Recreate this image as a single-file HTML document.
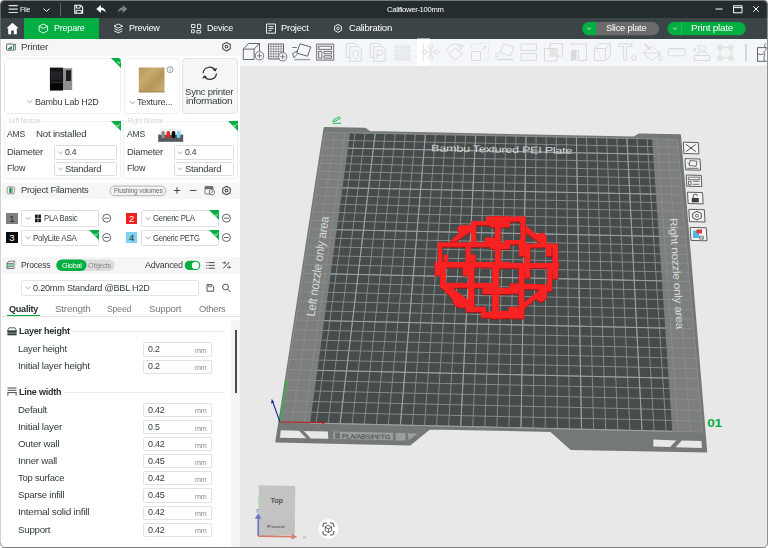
<!DOCTYPE html>
<html><head><meta charset="utf-8"><title>Califlower-100mm</title>
<style>
*{box-sizing:border-box;margin:0;padding:0}
html,body{width:768px;height:548px;overflow:hidden;background:#e8e8e8}
body{font-family:"Liberation Sans",sans-serif;font-size:9.3px;color:#303a3c;position:relative;letter-spacing:-0.25px}
.abs{position:absolute}
.t{position:absolute;white-space:nowrap;line-height:12px}
#titlebar{left:0;top:0;width:768px;height:18px;background:#252c2e}
#tabbar{left:0;top:18px;width:768px;height:21px;background:#3b4446}
#side{left:0;top:38.5px;width:240px;height:510px;background:#fff}
.hdr{position:absolute;left:2px;width:238px;background:#f6f6f6}
.card{position:absolute;border:1px solid #ebeef0;border-radius:4px;background:#fff}
.cb{position:absolute;border:1px solid #dedede;border-radius:1.5px;background:#fff}
.corner{position:absolute;width:0;height:0;border-style:solid;border-color:#00ae42 #00ae42 transparent transparent}
.corner::after{content:"";position:absolute;left:0.700px;top:-2.600px;width:3.200px;height:1.600px;border-left:0.700px solid #8fdca9;border-bottom:0.700px solid #8fdca9;transform:rotate(-52deg)}
.lbl{color:#333c3e}
.gray{color:#6b6b6b}
.unit{position:absolute;font-size:6.6px;color:#8a8a8a;letter-spacing:-0.1px;line-height:10px}
.sw{position:absolute;width:11.2px;height:11.2px;font-size:9.5px;line-height:11.2px;text-align:center;letter-spacing:0}
</style></head><body>
<div id="titlebar" class="abs"></div>
<div id="tabbar" class="abs"></div>
<div class="abs" style="left:23.7px;top:18px;width:75.5px;height:21px;background:#00ae42"></div>
<svg class="abs" style="left:0;top:0" width="768" height="40" viewBox="0 0 768 40" fill="none">
 <!-- hamburger -->
 <path d="M8.600 5.700h9.200M8.600 9.200h9.200M8.600 12.500h9.200" stroke="#e2e2e2" stroke-width="1.200"/>
 <!-- chevron -->
 <path d="M43.5 8.6l3 2.8 3-2.8" stroke="#fff" stroke-width="1"/>
 <path d="M60.5 3v13.5" stroke="#5a6264" stroke-width="1"/>
 <!-- save -->
 <path d="M74.8 5.3h5.8l2 2v6h-7.8z" stroke="#fff" stroke-width="1.1"/>
 <path d="M76.5 5.5v2.6h3.6V5.5M76.3 13v-2.6h5v2.6" stroke="#fff" stroke-width="0.9"/>
 <!-- undo -->
 <path d="M96.3 9l4.6-4v2.4c3 0 4.6 2 4.8 5.4-1.200-2-2.600-2.600-4.800-2.600v2.800z" fill="#fff"/>
 <!-- redo -->
 <path d="M127.300 9l-4.600-4v2.400c-3 0-4.600 2-4.800 5.400 1.200-2 2.600-2.600 4.800-2.600v2.800z" fill="#7d8486"/>
 <!-- home -->
 <path d="M12.500 22.800l-6 5.400h1.700v6h3v-3.600h2.600v3.600h3v-6h1.700z" fill="#fff"/>
 <!-- prepare cube -->
 <path d="M43.300 24l4.200 2.200v4.600l-4.200 2.300-4.200-2.300v-4.600zM39.300 26.300l4 2.200 4-2.200" stroke="#fff" stroke-width="0.9" stroke-linejoin="round"/>
 <!-- preview layers -->
 <path d="M118.300 24l4.300 2.100-4.300 2.100-4.300-2.100zM114.300 28.500l4 2 4-2M114.300 30.900l4 2 4-2" stroke="#fff" stroke-width="0.9" stroke-linejoin="round"/>
 <!-- device -->
 <path d="M191.500 24.500h3.500v3h-3.500zM197.500 24.300h3.200v4.200h-3.200zM191.500 29.800h2.800v3h-2.800zM196.800 30.500h3.800v2.500h-3.800z" stroke="#fff" stroke-width="0.85"/>
 <!-- project -->
 <path d="M266.500 24h9v9.200h-9zM268.500 26.600h5M268.500 28.600h5M268.500 30.600h3" stroke="#fff" stroke-width="0.9"/>
 <!-- calibration -->
 <path d="M338 24.400l3.400 2v4l-3.400 2-3.400-2v-4z" stroke="#fff" stroke-width="0.9"/><circle cx="338" cy="28.400" r="1.300" stroke="#fff" stroke-width="0.8"/>
 <!-- window controls -->
 <path d="M715.500 9h7" stroke="#fff" stroke-width="1"/>
 <path d="M733.500 5.800h8.500v7h-8.500zM733.500 7.600h8.500" stroke="#fff" stroke-width="1"/>
 <path d="M753.300 6.300l5.500 5.500M758.800 6.300l-5.500 5.500" stroke="#fff" stroke-width="1"/>
 <!-- slice -->
 <path d="M589 22h63.500a6.600 6.600 0 0 1 0 13.300H589z" fill="#6b6b6b"/>
 <path d="M596 22h-7.300a6.600 6.600 0 0 0 0 13.300H596z" fill="#00ae42"/>
 <path d="M587 27.600l2 1.800 2-1.800" stroke="#fff" stroke-width="0.8"/>
 <!-- print -->
 <rect x="667.400" y="22" width="78.400" height="13.300" rx="6.650" fill="#00ae42"/>
 <path d="M681.500 22v13.300" stroke="#2dbd62" stroke-width="0.7"/>
 <path d="M673 27.600l2 1.800 2-1.800" stroke="#fff" stroke-width="0.8"/>
</svg>
<div class="t" style="transform:scaleX(0.905);transform-origin:0 0;left:20px;top:4px;color:#fff;font-size:7.6px;letter-spacing:-0.3px">File</div>
<div class="t" style="transform:scaleX(1.032);transform-origin:0 0;left:386.500px;top:3.500px;color:#fff;font-size:7.4px;letter-spacing:-0.3px">Califlower-100mm</div>
<div class="t" style="transform:scaleX(0.921);transform-origin:0 0;left:54.300px;top:22.100px;color:#fff;font-size:9.8px">Prepare</div>
<div class="t" style="transform:scaleX(0.921);transform-origin:0 0;left:129.300px;top:22.100px;color:#fff;font-size:9.8px">Preview</div>
<div class="t" style="transform:scaleX(0.914);transform-origin:0 0;left:207.300px;top:22.100px;color:#fff;font-size:9.8px">Device</div>
<div class="t" style="transform:scaleX(0.957);transform-origin:0 0;left:281.300px;top:22.100px;color:#fff;font-size:9.8px">Project</div>
<div class="t" style="transform:scaleX(0.975);transform-origin:0 0;left:349px;top:22.100px;color:#fff;font-size:9.8px">Calibration</div>
<div class="t" style="transform:scaleX(0.952);transform-origin:0 0;left:605.500px;top:22.200px;color:#fff;font-size:9.8px">Slice plate</div>
<div class="t" style="transform:scaleX(1.015);transform-origin:0 0;left:691px;top:22.200px;color:#fff;font-size:9.8px">Print plate</div>
<div id="side" class="abs"></div>
<div class="abs" style="left:0;top:38.500px;width:1.200px;height:510px;background:#d2d2d2"></div>
<!-- Printer header -->
<div class="hdr" style="top:38.500px;height:17px"></div>
<svg class="abs" style="left:0;top:38" width="240" height="20" viewBox="0 38 240 20" fill="none">
 <rect x="6.600" y="44" width="7" height="6.200" rx="0.800" stroke="#3a4446" stroke-width="0.800"/>
 <path d="M13.600 45l1.800-1v5.600l-1.800 0.800M8 49l3.500-2.500v2.500z" stroke="#3a4446" stroke-width="0.700"/>
 <path d="M8 49l3.600-2.600v2.600z" fill="#00ae42"/>
 <path d="M226.500 42.400l3.800 2.100v4.300l-3.800 2.100-3.800-2.100v-4.300z" stroke="#4a5052" stroke-width="1.100" stroke-linejoin="round"/><circle cx="226.500" cy="46.600" r="1.400" stroke="#4a5052" stroke-width="1.100"/>
</svg>
<div class="t lbl" style="transform:scaleX(0.987);transform-origin:0 0;left:21.300px;top:40.500px;font-size:9.9px">Printer</div>
<!-- cards -->
<div class="card" style="left:3.500px;top:57.800px;width:117.700px;height:56px"></div>
<div class="corner" style="left:111.200px;top:57.800px;border-width:5px 5px 5px 5px;border-top-right-radius:4px"></div>
<div class="card" style="left:124.200px;top:57.800px;width:55.600px;height:56px"></div>
<div class="card" style="left:182px;top:57.800px;width:55.700px;height:56px;background:#f6f6f6;border-color:#e3e3e3"></div>
<!-- printer image -->
<svg class="abs" style="left:48px;top:66px" width="26" height="26" viewBox="0 0 26 26">
 <rect x="1.900" y="1.600" width="13.100" height="23" fill="#161618"/>
 <rect x="15" y="2.200" width="9.200" height="21.800" fill="#8e8f91"/>
 <rect x="18" y="4.200" width="5" height="10.800" fill="#1c1d1f"/>
 <rect x="3" y="5.500" width="11" height="8" fill="#222326"/>
 <rect x="2.500" y="16.300" width="12" height="0.700" fill="#3a3a3c"/>
 <rect x="2.200" y="17.500" width="12.600" height="6.500" fill="#050505"/>
</svg>
<svg class="abs" style="left:26px;top:99.300px" width="8" height="6" viewBox="0 0 8 6" fill="none"><path d="M1 1.500l2.500 2.200 2.500-2.200" stroke="#8a9092" stroke-width="0.800"/></svg>
<div class="t lbl" style="transform:scaleX(0.918);transform-origin:0 0;left:34.500px;top:95.500px;font-size:9.8px">Bambu Lab H2D</div>
<!-- plate image -->
<svg class="abs" style="left:138px;top:65.500px" width="38" height="28" viewBox="0 0 38 28">
 <defs><linearGradient id="pg" x1="0" y1="0" x2="1" y2="1"><stop offset="0" stop-color="#b89a5e"/><stop offset="0.350" stop-color="#c8ab6e"/><stop offset="0.600" stop-color="#b59659"/><stop offset="1" stop-color="#cdb079"/></linearGradient></defs>
 <rect x="0.800" y="1.500" width="25.700" height="24.800" fill="url(#pg)"/><rect x="0.800" y="25.300" width="25.700" height="1" fill="#a08450"/>
 <circle cx="32" cy="3.600" r="3" fill="#fff" stroke="#6b7375" stroke-width="0.700"/>
 <path d="M32 2v0.800M32 3.400v2" stroke="#6b7375" stroke-width="0.700"/>
</svg>
<svg class="abs" style="left:128.700px;top:99.500px" width="8" height="6" viewBox="0 0 8 6" fill="none"><path d="M1 1.500l2.500 2.200 2.500-2.200" stroke="#8a9092" stroke-width="0.800"/></svg>
<div class="t lbl" style="transform:scaleX(0.934);transform-origin:0 0;left:137.200px;top:95.500px;font-size:9.8px">Texture...</div>
<!-- sync -->
<svg class="abs" style="left:198.900px;top:64.200px" width="22" height="19.800" viewBox="0 0 20 18" fill="none">
 <path d="M3.700 8.500a6 6 0 0 1 11-2.800" stroke="#303a3c" stroke-width="1.100"/>
 <path d="M15.900 8.500a6 6 0 0 1-11 2.800" stroke="#303a3c" stroke-width="1.100"/>
 <path d="M16.600 3.500l-1.500 3.300-3-1.600z" fill="#303a3c"/>
 <path d="M3 13.500l1.500-3.300 3 1.600z" fill="#303a3c"/>
</svg>
<div class="t lbl" style="transform:scaleX(0.978);transform-origin:0 0;left:185.200px;top:85.600px;font-size:9.8px">Sync printer</div>
<div class="t lbl" style="transform:scaleX(1.013);transform-origin:0 0;left:185.500px;top:95.300px;font-size:9.8px">information</div>
<!-- nozzle boxes -->
<div class="card" style="left:3.500px;top:120.500px;width:117.200px;height:58.800px;border-color:#ebf2f6;border-radius:2px"></div>
<div class="card" style="left:122.800px;top:120.500px;width:115px;height:58.800px;border-color:#ebf2f6;border-radius:2px"></div>
<div class="t" style="transform:scaleX(1.003);transform-origin:0 0;left:6.500px;top:115.500px;font-size:6.6px;color:#d0d3d5;background:#fff;padding:0 1.500px;line-height:9px;letter-spacing:-0.1px">Left Nozzle</div>
<div class="t" style="transform:scaleX(0.987);transform-origin:0 0;left:126px;top:115.500px;font-size:6.6px;color:#d0d3d5;background:#fff;padding:0 1.500px;line-height:9px;letter-spacing:-0.1px">Right Nozzle</div>
<div class="corner" style="left:110.700px;top:120.500px;border-width:5px"></div>
<div class="corner" style="left:227.800px;top:120.500px;border-width:5px"></div>
<div class="t lbl" style="transform:scaleX(0.879);transform-origin:0 0;left:7px;top:128.300px;font-size:9.8px">AMS</div>
<div class="t lbl" style="transform:scaleX(0.995);transform-origin:0 0;left:35.500px;top:128.300px;font-size:9.8px">Not installed</div>
<div class="t lbl" style="transform:scaleX(0.879);transform-origin:0 0;left:126.700px;top:128.300px;font-size:9.8px">AMS</div>
<svg class="abs" style="left:157.800px;top:129px;overflow:visible" width="26" height="14" viewBox="0 0 26 14">
 <rect x="0.200" y="5.500" width="25" height="7.300" fill="#55595a"/>
 <rect x="2" y="-0.300" width="21.500" height="6" rx="1" fill="#eceded"/>
 <rect x="3.300" y="2" width="3.600" height="7.300" rx="1.700" fill="#8a8c8d"/>
 <rect x="8.500" y="2" width="3.600" height="7.300" rx="1.700" fill="#f02424"/>
 <rect x="13.700" y="2" width="3.600" height="7.300" rx="1.700" fill="#0e0e0e"/>
 <rect x="18.800" y="2" width="3.600" height="7.300" rx="1.700" fill="#78d4f4"/>
</svg>
<div class="t lbl" style="transform:scaleX(0.951);transform-origin:0 0;left:7px;top:146px;font-size:9.8px">Diameter</div>
<div class="t lbl" style="transform:scaleX(0.924);transform-origin:0 0;left:7px;top:162px;font-size:9.8px">Flow</div>
<div class="t lbl" style="transform:scaleX(0.951);transform-origin:0 0;left:126.700px;top:146px;font-size:9.8px">Diameter</div>
<div class="t lbl" style="transform:scaleX(0.924);transform-origin:0 0;left:126.700px;top:162px;font-size:9.8px">Flow</div>
<div class="cb" style="left:53.500px;top:145.300px;width:63px;height:14.300px"></div>
<div class="cb" style="left:53.500px;top:161.600px;width:63px;height:14.300px"></div>
<div class="cb" style="left:173.500px;top:145.300px;width:60.500px;height:14.300px"></div>
<div class="cb" style="left:173.500px;top:161.600px;width:60.500px;height:14.300px"></div>
<svg class="abs" style="left:0;top:145px" width="240" height="32" viewBox="0 145 240 32" fill="none" stroke="#8a9092" stroke-width="0.800">
 <path d="M58.200 151.600l2.200 2 2.200-2M58.200 167.800l2.200 2 2.200-2M178 151.600l2.200 2 2.200-2M178 167.800l2.200 2 2.200-2"/>
</svg>
<div class="t lbl" style="transform:scaleX(0.885);transform-origin:0 0;left:65.300px;top:146.400px;font-size:9.8px">0.4</div>
<div class="t lbl" style="transform:scaleX(0.956);transform-origin:0 0;left:65.300px;top:162.600px;font-size:9.8px">Standard</div>
<div class="t lbl" style="transform:scaleX(0.885);transform-origin:0 0;left:185px;top:146.400px;font-size:9.8px">0.4</div>
<div class="t lbl" style="transform:scaleX(0.956);transform-origin:0 0;left:185px;top:162.600px;font-size:9.8px">Standard</div>
<!-- Project Filaments header -->
<div class="hdr" style="top:182.500px;height:16.500px"></div>
<svg class="abs" style="left:0;top:182" width="240" height="18" viewBox="0 182 240 18" fill="none">
 <rect x="7.200" y="186.800" width="7.200" height="7" rx="1.500" stroke="#6a7072" stroke-width="0.700"/>
 <path d="M9.500 187.600v5.400M12.100 187.600v5.400" stroke="#3a4446" stroke-width="0.600"/>
 <rect x="10" y="187.800" width="1.600" height="5" fill="#00ae42"/>
 <rect x="110" y="186" width="55.800" height="9.700" rx="4.850" fill="#f2f2f2" stroke="#9a9a9a" stroke-width="0.700"/>
 <path d="M173.800 190.500h6.400M177 187.300v6.400" stroke="#303a3c" stroke-width="0.900"/>
 <path d="M190 190.500h6.400" stroke="#303a3c" stroke-width="0.900"/>
 <rect x="205" y="186.400" width="8" height="7.600" rx="0.800" stroke="#5a6062" stroke-width="0.800"/><rect x="205" y="186.400" width="8" height="2.800" fill="#6a6e70"/>
 <circle cx="211.800" cy="192.200" r="2.700" fill="#f6f6f6" stroke="#5a6062" stroke-width="0.800"/><path d="M210.600 193.200l2.400-2" stroke="#5a6062" stroke-width="0.900"/>
 <path d="M226.500 186.300l3.800 2.100v4.300l-3.800 2.100-3.800-2.100v-4.300z" stroke="#4a5052" stroke-width="1.100" stroke-linejoin="round"/><circle cx="226.500" cy="190.500" r="1.400" stroke="#4a5052" stroke-width="1.100"/>
</svg>
<div class="t lbl" style="transform:scaleX(0.937);transform-origin:0 0;left:21.300px;top:184.300px;font-size:9.9px">Project Filaments</div>
<div class="t" style="transform:scaleX(0.909);transform-origin:0 0;left:113.500px;top:185.300px;font-size:7.300px;color:#6b6b6b;line-height:11px;letter-spacing:-0.2px">Flushing volumes</div>
<!-- filament rows -->
<div class="sw" style="left:6.400px;top:212.600px;background:#808080;color:#2a2a2a">1</div>
<div class="sw" style="left:6.400px;top:231.800px;background:#0d0d0d;color:#fff">3</div>
<div class="sw" style="left:126px;top:212.600px;background:#f02020;color:#fff">2</div>
<div class="sw" style="left:126px;top:231.800px;background:#7ed3f1;color:#2a2a2a">4</div>
<div class="cb" style="left:21.300px;top:210.300px;width:77.400px;height:16.400px"></div>
<div class="cb" style="left:21.300px;top:229.600px;width:77.400px;height:16.400px"></div>
<div class="cb" style="left:141px;top:210.300px;width:77.500px;height:16.400px"></div>
<div class="cb" style="left:141px;top:229.600px;width:77.500px;height:16.400px"></div>
<div class="corner" style="left:88.700px;top:229.600px;border-width:5px"></div>
<div class="corner" style="left:208.500px;top:210.300px;border-width:5px"></div>
<div class="corner" style="left:208.500px;top:229.600px;border-width:5px"></div>
<svg class="abs" style="left:0;top:208" width="240" height="40" viewBox="0 208 240 40" fill="none">
 <g stroke="#8a9092" stroke-width="0.800"><path d="M26 217.500l2.300 2 2.300-2M26 236.800l2.300 2 2.300-2M145.800 217.500l2.300 2 2.300-2M145.800 236.800l2.300 2 2.300-2"/></g>
 <rect x="35" y="214.600" width="6" height="7.600" fill="#1a1a1a"/>
 <path d="M38 214.600v7.600M35 218.400h6" stroke="#fff" stroke-width="0.600"/>
 <g stroke="#3a4446" stroke-width="0.800"><circle cx="106.700" cy="218.200" r="4"/><circle cx="106.700" cy="237.500" r="4"/><circle cx="226.400" cy="218.200" r="4"/><circle cx="226.400" cy="237.500" r="4"/>
 <path d="M104.300 218.200h4.800M104.300 237.500h4.800M224 218.200h4.800M224 237.500h4.800"/></g>
</svg>
<div class="t lbl" style="transform:scaleX(0.830);transform-origin:0 0;left:44px;top:212.300px;font-size:9.3px">PLA Basic</div>
<div class="t lbl" style="transform:scaleX(0.861);transform-origin:0 0;left:33.200px;top:231.600px;font-size:9.3px">PolyLite ASA</div>
<div class="t lbl" style="transform:scaleX(0.835);transform-origin:0 0;left:152.700px;top:212.300px;font-size:9.3px">Generic PLA</div>
<div class="t lbl" style="transform:scaleX(0.813);transform-origin:0 0;left:152.700px;top:231.600px;font-size:9.3px">Generic PETG</div>
<!-- Process header -->
<div class="hdr" style="top:257.300px;height:16.300px"></div>
<svg class="abs" style="left:0;top:257" width="240" height="18" viewBox="0 257 240 18" fill="none">
 <path d="M7 263.600l1.600-2.400h6.400l-1.600 2.400z" stroke="#3a4446" stroke-width="0.700" stroke-linejoin="round"/>
 <path d="M7.200 265h6.600l1.200-1.400" stroke="#00ae42" stroke-width="0.900"/>
 <path d="M7 266.700h6.800l1.200-1.400M7 268.500h6.800l1.200-1.400M7 263.600v5" stroke="#3a4446" stroke-width="0.700"/>
 <rect x="56.300" y="259.500" width="58.500" height="11.400" rx="5.700" fill="#dcdcdc"/>
 <rect x="56.300" y="259.500" width="30.300" height="11.400" rx="5.700" fill="#00ae42"/>
 <rect x="184.700" y="260.700" width="15.600" height="9.400" rx="4.700" fill="#00ae42"/>
 <circle cx="195.500" cy="265.400" r="3.600" fill="#fff"/>
 <path d="M208.500 262.600h6.300M208.500 265.400h6.300M208.500 268.200h6.300" stroke="#303a3c" stroke-width="0.900"/>
 <path d="M206.300 262.600h1.100M206.300 265.400h1.100M206.300 268.200h1.100" stroke="#303a3c" stroke-width="0.900"/>
 <path d="M223.200 268.400l6.200-6.400" stroke="#303a3c" stroke-width="1"/><path d="M222.300 262.800h3.200M224.300 261.400l1.400 1.400-1.400 1.400M227 267.300h3.200M229 265.900l1.400 1.400-1.400 1.400" stroke="#303a3c" stroke-width="0.800"/>
</svg>
<div class="t lbl" style="transform:scaleX(0.867);transform-origin:0 0;left:21.300px;top:259.100px;font-size:9.9px">Process</div>
<div class="t" style="transform:scaleX(0.991);transform-origin:0 0;left:61.800px;top:259.700px;font-size:7.400px;color:#fff;line-height:11px">Global</div>
<div class="t" style="transform:scaleX(0.987);transform-origin:0 0;left:88px;top:259.700px;font-size:7.400px;color:#8a8a8a;line-height:11px">Objects</div>
<div class="t lbl" style="transform:scaleX(0.902);transform-origin:0 0;left:144.800px;top:259.100px;font-size:9.9px">Advanced</div>
<!-- preset -->
<div class="cb" style="left:21.300px;top:279.700px;width:177.400px;height:16.400px;border-color:#dfe6ea"></div>
<svg class="abs" style="left:0;top:279" width="240" height="18" viewBox="0 279 240 18" fill="none">
 <path d="M26 286.800l2.300 2 2.300-2" stroke="#8a9092" stroke-width="0.800"/>
 <path d="M207 284.600h4.800l1.800 1.800v4.800H207z" stroke="#3a4446" stroke-width="0.900"/><path d="M208.400 284.800v2h2.800v-2" stroke="#3a4446" stroke-width="0.700"/>
 <circle cx="225.500" cy="287" r="2.900" stroke="#3a4446" stroke-width="0.900"/><path d="M227.700 289.200l2.800 2.800" stroke="#3a4446" stroke-width="1"/>
</svg>
<div class="t lbl" style="transform:scaleX(0.933);transform-origin:0 0;left:33.200px;top:281.800px;font-size:9.8px">0.20mm Standard @BBL H2D</div>
<!-- tabs -->
<div class="t" style="transform:scaleX(0.925);transform-origin:0 0;left:8.500px;top:302.600px;font-size:9.8px;font-weight:bold;color:#262e30;">Quality</div>
<div class="t gray" style="transform:scaleX(1.010);transform-origin:0 0;left:54.500px;top:302.600px;font-size:9.8px;color:#7a7a7a">Strength</div>
<div class="t gray" style="transform:scaleX(0.893);transform-origin:0 0;left:107px;top:302.600px;font-size:9.8px;color:#7a7a7a">Speed</div>
<div class="t gray" style="transform:scaleX(0.988);transform-origin:0 0;left:148.700px;top:302.600px;font-size:9.8px;color:#7a7a7a">Support</div>
<div class="t gray" style="transform:scaleX(0.950);transform-origin:0 0;left:198.600px;top:302.600px;font-size:9.8px;color:#7a7a7a">Others</div>
<div class="abs" style="left:7px;top:314.500px;width:32.700px;height:1.700px;background:#00ae42"></div>
<div class="abs" style="left:2px;top:316.200px;width:238px;height:0.800px;background:#e4e4e4"></div>
<div class="abs" style="left:231px;top:319.500px;width:9px;height:227px;background:#f4f4f4"></div>
<div class="abs" style="left:235px;top:329.700px;width:1.500px;height:63.500px;background:#4a4a4a"></div>
<svg class="abs" style="left:6.500px;top:326.8px" width="10" height="9" viewBox="0 0 10 9"><path d="M2 0.800h6l1.600 3H0.400z" fill="none" stroke="#303a3c" stroke-width="0.800"/><rect x="0.400" y="3.800" width="9.200" height="2" fill="#303a3c"/><rect x="0.400" y="6.300" width="9.200" height="2" fill="#303a3c"/></svg>
<div class="t" style="transform:scaleX(0.917);transform-origin:0 0;left:19px;top:325.1px;font-size:9.8px;font-weight:bold;color:#262e30">Layer height</div>
<div class="abs" style="left:72px;top:331.300px;width:153px;height:0.700px;background:#ececec"></div>
<div class="t lbl" style="transform:scaleX(0.982);transform-origin:0 0;left:17.800px;top:343.3px;font-size:9.6px">Layer height</div>
<div class="cb" style="left:143.200px;top:342.4px;width:68.400px;height:14.200px;border-color:#e2e2e2"></div>
<div class="t lbl" style="transform:scaleX(0.921);transform-origin:0 0;left:147.600px;top:343.3px;font-size:9.6px">0.2</div>
<div class="unit" style="transform:scaleX(1.084);transform-origin:0 0;left:194.500px;top:345.9px">mm</div>
<div class="t lbl" style="transform:scaleX(1.028);transform-origin:0 0;left:17.800px;top:360.4px;font-size:9.6px">Initial layer height</div>
<div class="cb" style="left:143.200px;top:359.5px;width:68.400px;height:14.200px;border-color:#e2e2e2"></div>
<div class="t lbl" style="transform:scaleX(0.921);transform-origin:0 0;left:147.600px;top:360.4px;font-size:9.6px">0.2</div>
<div class="unit" style="transform:scaleX(1.084);transform-origin:0 0;left:194.500px;top:363.0px">mm</div>
<svg class="abs" style="left:6.500px;top:387.2px" width="10" height="9" viewBox="0 0 10 9"><path d="M0.500 1h9M0.500 3.300h9M0.500 5.600h9M0.900 5.600v3M9.100 5.600v3" fill="none" stroke="#303a3c" stroke-width="0.900"/></svg>
<div class="t" style="transform:scaleX(0.923);transform-origin:0 0;left:19px;top:385.5px;font-size:9.8px;font-weight:bold;color:#262e30">Line width</div>
<div class="abs" style="left:64px;top:391.700px;width:161px;height:0.700px;background:#ececec"></div>
<div class="t lbl" style="transform:scaleX(1.012);transform-origin:0 0;left:17.800px;top:403.8px;font-size:9.6px">Default</div>
<div class="cb" style="left:143.200px;top:402.9px;width:68.400px;height:14.200px;border-color:#e2e2e2"></div>
<div class="t lbl" style="transform:scaleX(0.939);transform-origin:0 0;left:147.600px;top:403.8px;font-size:9.6px">0.42</div>
<div class="unit" style="transform:scaleX(1.084);transform-origin:0 0;left:194.500px;top:406.4px">mm</div>
<div class="t lbl" style="transform:scaleX(1.033);transform-origin:0 0;left:17.800px;top:420.9px;font-size:9.6px">Initial layer</div>
<div class="cb" style="left:143.200px;top:420.0px;width:68.400px;height:14.200px;border-color:#e2e2e2"></div>
<div class="t lbl" style="transform:scaleX(0.921);transform-origin:0 0;left:147.600px;top:420.9px;font-size:9.6px">0.5</div>
<div class="unit" style="transform:scaleX(1.084);transform-origin:0 0;left:194.500px;top:423.5px">mm</div>
<div class="t lbl" style="transform:scaleX(1.015);transform-origin:0 0;left:17.800px;top:438.0px;font-size:9.6px">Outer wall</div>
<div class="cb" style="left:143.200px;top:437.1px;width:68.400px;height:14.200px;border-color:#e2e2e2"></div>
<div class="t lbl" style="transform:scaleX(0.939);transform-origin:0 0;left:147.600px;top:438.0px;font-size:9.6px">0.42</div>
<div class="unit" style="transform:scaleX(1.084);transform-origin:0 0;left:194.500px;top:440.6px">mm</div>
<div class="t lbl" style="transform:scaleX(1.011);transform-origin:0 0;left:17.800px;top:455.1px;font-size:9.6px">Inner wall</div>
<div class="cb" style="left:143.200px;top:454.2px;width:68.400px;height:14.200px;border-color:#e2e2e2"></div>
<div class="t lbl" style="transform:scaleX(0.939);transform-origin:0 0;left:147.600px;top:455.1px;font-size:9.6px">0.45</div>
<div class="unit" style="transform:scaleX(1.084);transform-origin:0 0;left:194.500px;top:457.7px">mm</div>
<div class="t lbl" style="transform:scaleX(0.988);transform-origin:0 0;left:17.800px;top:472.2px;font-size:9.6px">Top surface</div>
<div class="cb" style="left:143.200px;top:471.3px;width:68.400px;height:14.200px;border-color:#e2e2e2"></div>
<div class="t lbl" style="transform:scaleX(0.939);transform-origin:0 0;left:147.600px;top:472.2px;font-size:9.6px">0.42</div>
<div class="unit" style="transform:scaleX(1.084);transform-origin:0 0;left:194.500px;top:474.8px">mm</div>
<div class="t lbl" style="transform:scaleX(0.999);transform-origin:0 0;left:17.800px;top:489.3px;font-size:9.6px">Sparse infill</div>
<div class="cb" style="left:143.200px;top:488.4px;width:68.400px;height:14.200px;border-color:#e2e2e2"></div>
<div class="t lbl" style="transform:scaleX(0.939);transform-origin:0 0;left:147.600px;top:489.3px;font-size:9.6px">0.45</div>
<div class="unit" style="transform:scaleX(1.084);transform-origin:0 0;left:194.500px;top:491.9px">mm</div>
<div class="t lbl" style="transform:scaleX(1.043);transform-origin:0 0;left:17.800px;top:506.4px;font-size:9.6px">Internal solid infill</div>
<div class="cb" style="left:143.200px;top:505.5px;width:68.400px;height:14.200px;border-color:#e2e2e2"></div>
<div class="t lbl" style="transform:scaleX(0.939);transform-origin:0 0;left:147.600px;top:506.4px;font-size:9.6px">0.42</div>
<div class="unit" style="transform:scaleX(1.084);transform-origin:0 0;left:194.500px;top:509.0px">mm</div>
<div class="t lbl" style="transform:scaleX(1.014);transform-origin:0 0;left:17.800px;top:523.5px;font-size:9.6px">Support</div>
<div class="cb" style="left:143.200px;top:522.6px;width:68.400px;height:14.200px;border-color:#e2e2e2"></div>
<div class="t lbl" style="transform:scaleX(0.939);transform-origin:0 0;left:147.600px;top:523.5px;font-size:9.6px">0.42</div>
<div class="unit" style="transform:scaleX(1.084);transform-origin:0 0;left:194.500px;top:526.1px">mm</div>
<!-- canvas -->
<div class="abs" style="left:240px;top:38.500px;width:528px;height:27.300px;background:#f3f7f9"></div>
<svg class="abs" style="left:240px;top:38px" width="528" height="510" viewBox="240 38 528 510" fill="none">
<polygon points="324.6,128.0 365.2,128.7 369.7,132.0 633.9,137.5 639.0,134.5 680.0,135.2 706.2,451.5 571.0,448.9 550.9,431.0 429.6,428.4 409.6,444.6 276.3,441.6" fill="#747877" stroke="#747877" stroke-width="2" stroke-linejoin="round"/>
<polygon points="280.0,422.3 702.6,432.0 677.4,139.4 325.0,132.4" fill="#7c7f7e"/>
<path d="M280.0,422.3 L325.0,132.4 M292.0,422.6 L335.0,132.6 M304.0,422.9 L345.1,132.8 M678.3,431.4 L657.2,139.0 M690.5,431.7 L667.3,139.2 M702.6,432.0 L677.4,139.4 M280.0,422.3 L702.6,432.0 M281.7,411.5 L701.7,421.1 M283.3,400.8 L700.7,410.3 M285.0,390.3 L699.8,399.7 M286.6,379.9 L698.9,389.2 M288.2,369.6 L698.0,378.8 M289.8,359.5 L697.1,368.6 M291.3,349.4 L696.3,358.4 M292.8,339.5 L695.4,348.4 M294.4,329.7 L694.5,338.5 M295.9,320.0 L693.7,328.7 M297.4,310.5 L692.9,319.1 M298.8,301.0 L692.1,309.5 M300.3,291.7 L691.2,300.1 M301.7,282.4 L690.4,290.8 M303.1,273.3 L689.6,281.5 M304.5,264.2 L688.9,272.4 M305.9,255.3 L688.1,263.4 M307.3,246.5 L687.3,254.5 M308.6,237.7 L686.6,245.7 M310.0,229.1 L685.8,236.9 M311.3,220.5 L685.1,228.3 M312.6,212.1 L684.3,219.8 M313.9,203.7 L683.6,211.4 M315.2,195.5 L682.9,203.0 M316.5,187.3 L682.2,194.8 M317.7,179.2 L681.5,186.6 M319.0,171.2 L680.8,178.5 M320.2,163.3 L680.1,170.5 M321.4,155.4 L679.4,162.6 M322.6,147.7 L678.7,154.8 M323.8,140.0 L678.1,147.1 M325.0,132.4 L677.4,139.4" stroke="#8a8d8c" stroke-width="0.9" fill="none"/>
<polygon points="310.1,423.0 672.3,431.3 652.1,138.9 350.1,132.9" fill="#464b4c"/>
<path d="M316.1,423.1 L355.1,133.0 M328.1,423.4 L365.1,133.2 M340.1,423.7 L375.2,133.4 M352.2,424.0 L385.2,133.6 M364.2,424.2 L395.3,133.8 M376.3,424.5 L405.3,134.0 M388.3,424.8 L415.4,134.2 M400.4,425.1 L425.4,134.4 M412.4,425.3 L435.5,134.6 M424.5,425.6 L445.5,134.8 M436.5,425.9 L455.6,135.0 M448.6,426.2 L465.6,135.2 M460.7,426.4 L475.7,135.4 M472.7,426.7 L485.8,135.6 M484.8,427.0 L495.8,135.8 M496.9,427.3 L505.9,136.0 M508.9,427.6 L516.0,136.2 M521.0,427.8 L526.0,136.4 M533.1,428.1 L536.1,136.6 M545.2,428.4 L546.2,136.8 M557.3,428.7 L556.3,137.0 M569.4,428.9 L566.4,137.2 M581.5,429.2 L576.4,137.4 M593.6,429.5 L586.5,137.6 M605.7,429.8 L596.6,137.8 M617.8,430.1 L606.7,138.0 M629.9,430.3 L616.8,138.2 M642.0,430.6 L626.9,138.4 M654.1,430.9 L637.0,138.6 M666.2,431.2 L647.1,138.8 M310.1,423.0 L672.3,431.3 M311.6,412.2 L671.5,420.4 M313.0,401.5 L670.8,409.6 M314.5,391.0 L670.1,399.0 M315.9,380.6 L669.3,388.5 M317.3,370.3 L668.6,378.1 M318.7,360.1 L667.9,367.9 M320.1,350.1 L667.2,357.8 M321.5,340.2 L666.5,347.8 M322.8,330.4 L665.9,337.9 M324.2,320.7 L665.2,328.1 M325.5,311.1 L664.5,318.5 M326.8,301.6 L663.9,308.9 M328.1,292.3 L663.2,299.5 M329.4,283.0 L662.6,290.2 M330.6,273.9 L661.9,280.9 M331.9,264.8 L661.3,271.8 M333.1,255.9 L660.7,262.8 M334.3,247.0 L660.1,253.9 M335.5,238.3 L659.5,245.1 M336.7,229.7 L658.9,236.4 M337.9,221.1 L658.3,227.8 M339.1,212.6 L657.7,219.2 M340.2,204.3 L657.1,210.8 M341.4,196.0 L656.5,202.5 M342.5,187.8 L656.0,194.2 M343.6,179.7 L655.4,186.1 M344.7,171.7 L654.8,178.0 M345.8,163.8 L654.3,170.0 M346.9,155.9 L653.7,162.1 M348.0,148.2 L653.2,154.3 M349.0,140.5 L652.7,146.6 M350.1,132.9 L652.1,138.9" stroke="#8c908f" stroke-width="0.9" fill="none"/>
<path d="M340.1,423.7 L375.2,133.4 M400.4,425.1 L425.4,134.4 M460.7,426.4 L475.7,135.4 M521.0,427.8 L526.0,136.4 M581.5,429.2 L576.4,137.4 M642.0,430.6 L626.9,138.4 M310.1,423.0 L672.3,431.3 M317.3,370.3 L668.6,378.1 M324.2,320.7 L665.2,328.1 M330.6,273.9 L661.9,280.9 M336.7,229.7 L658.9,236.4 M342.5,187.8 L656.0,194.2 M348.0,148.2 L653.2,154.3" stroke="#9da1a0" stroke-width="1" fill="none"/><defs><filter id="mf" x="-5%" y="-5%" width="110%" height="110%" color-interpolation-filters="sRGB"><feOffset in="SourceAlpha" dy="-1.3" result="sh"/><feComposite in="SourceGraphic" in2="sh" operator="in" result="top"/><feFlood flood-color="#a81212"/><feComposite in2="SourceAlpha" operator="in" result="dark"/><feMerge><feMergeNode in="dark"/><feMergeNode in="top"/></feMerge></filter></defs><g fill="#f82222" filter="url(#mf)"><g transform="translate(430,205) scale(0.11869)"><rect x="470" y="98" width="204" height="42"/><rect x="350" y="135" width="324" height="43"/><rect x="345" y="135" width="45" height="205"/><rect x="548" y="98" width="48" height="450"/><rect x="460" y="275" width="100" height="43"/><rect x="65" y="315" width="609" height="45"/><rect x="600" y="318" width="74" height="60"/><rect x="65" y="315" width="40" height="233"/><polygon points="163,312 243,237 228,211 237,184 267,170 349,170 349,228 223,312"/><rect x="300" y="340" width="45" height="160"/><rect x="115" y="420" width="40" height="60"/><rect x="345" y="420" width="40" height="60"/><rect x="40" y="480" width="634" height="53"/></g><g transform="translate(490,205) scale(0.11869)"><rect x="0" y="98" width="300" height="50"/><rect x="0" y="150" width="165" height="45"/><rect x="40" y="100" width="50" height="448"/><rect x="255" y="100" width="45" height="320"/><rect x="0" y="330" width="168" height="48"/><rect x="124" y="295" width="146" height="45"/><rect x="239" y="326" width="331" height="40"/><polygon points="299,172 401,253 412,238 436,233 463,245 478,269 478,329 419,329 299,238"/><rect x="525" y="330" width="50" height="218"/><rect x="245" y="360" width="45" height="80"/><rect x="290" y="350" width="50" height="198"/><rect x="470" y="360" width="50" height="80"/><rect x="0" y="490" width="575" height="50"/></g><g transform="translate(430,260) scale(0.11869)"><rect x="40" y="17" width="634" height="53"/><rect x="40" y="60" width="45" height="80"/><rect x="85" y="60" width="50" height="180"/><rect x="275" y="60" width="45" height="80"/><rect x="320" y="60" width="55" height="380"/><rect x="85" y="193" width="463" height="49"/><rect x="440" y="240" width="234" height="55"/><rect x="525" y="60" width="55" height="440"/><polygon points="91,236 190,338 190,361 213,392 243,408 322,409 322,338 190,239"/><rect x="300" y="395" width="174" height="50"/><rect x="430" y="440" width="244" height="55"/></g><g transform="translate(490,260) scale(0.11869)"><rect x="0" y="25" width="580" height="50"/><rect x="20" y="60" width="55" height="440"/><rect x="240" y="60" width="50" height="440"/><rect x="290" y="75" width="50" height="85"/><rect x="480" y="60" width="45" height="210"/><rect x="525" y="75" width="50" height="90"/><polygon points="165,195 520,208 520,262 165,246"/><rect x="0" y="235" width="240" height="55"/><polygon points="419,253 481,253 481,324 436,365 399,345 388,334 287,419 287,355"/><rect x="155" y="395" width="85" height="50"/><rect x="0" y="430" width="270" height="70"/></g></g><!-- toolbar white strip -->
<rect x="417" y="38.500" width="13" height="27.300" fill="#fff"/>
<!-- toolbar icons: active -->
<g stroke="#4c4c4c" stroke-width="0.850" fill="none" stroke-linejoin="round">
 <path d="M243.300 49.100h10.800v10.400h-10.800zM243.300 49.100l5.200-5.600h11l-5.400 5.600M259.500 43.500v8"/>
 <circle cx="259.500" cy="55.800" r="4.100" fill="#f3f7f9" stroke="#666"/><path d="M257 55.800h5M259.500 53.300v5" stroke="#666"/>
 <path d="M268.500 44h15v15h-15z"/>
 <path d="M271 44v15M273.500 44v15M276 44v15M278.500 44v15M281 44v15M268.500 46.500h15M268.500 49h15M268.500 51.500h15M268.500 54h15M268.500 56.500h15" stroke-width="0.550" stroke="#6a6a6a"/>
 <circle cx="282.700" cy="56.800" r="4.100" fill="#f3f7f9" stroke="#666"/><path d="M280.200 56.800h5M282.700 54.300v5" stroke="#666"/>
 <path d="M300 43.800l10.800 3.200-3.300 9.200-10.800-3.200z"/>
 <path d="M294.200 59.600h16" stroke-width="1.400" stroke="#a2a2a2"/>
 <path d="M298 50.500l-5.400 3 1.200 4.400 3.800-4M292.300 47.500h4.500" stroke-width="0.800"/>
 <rect x="316.600" y="44.100" width="17" height="16.100" stroke-width="1.300" stroke="#8c8c8c"/>
 <path d="M318.700 46.200h12.800v3.200h-12.800zM318.700 51.400h3.200v6.800h-3.200zM324 51.400h7.500v2.400h-7.500zM324 55.800h7.500v2.400h-7.500z" stroke-width="0.800"/>
</g>
<!-- toolbar icons: faded -->
<g stroke="#dad7d5" stroke-width="0.900" fill="none" stroke-linejoin="round">
 <path d="M346.300 43.300h8.800l2.400 2.400v11.800h-11.200z"/><path d="M349.800 46.600h9l2.600 2.600v12.100h-11.600z" fill="#f3f7f9"/><ellipse cx="355.700" cy="54.500" rx="2.700" ry="4.200"/>
 <path d="M370.200 43.300h8.800l2.400 2.400v11.800h-11.200z"/><path d="M373.700 46.600h9l2.600 2.600v12.100h-11.600z" fill="#f3f7f9"/><path d="M377.300 58.700v-8.500h3a2.500 2.500 0 0 1 0 5h-3"/>
 <path d="M395 45.800h15v2h-15zM395 50h15v2h-15zM395 54h15v2h-15zM395 57.800h15v2h-15z" stroke-width="0.700"/>
 <path d="M423.300 43.500v17.500" stroke-width="0.700"/>
 <path d="M430.800 43.300l2.800 3.200h-1.700v2.600h-2.200v-2.600h-1.700zM430.800 60.700l2.800-3.200h-1.700v-2.600h-2.200v2.600h-1.700zM422 52l3.200-2.800v1.700h2.600v2.200h-2.600v1.700zM439.600 52l-3.200-2.800v1.700h-2.600v2.200h2.600v1.700zM429.800 51h2v2h-2z" stroke-width="0.750"/>
 <path d="M455.500 48l7 6-7 6-7-6z"/><path d="M446.800 52a8 8 0 0 1 13.800-5.500M459 44.500l4.600 1-3 4z" stroke-width="0.800"/>
 <path d="M471.500 51.500h9v9h-9z"/><path d="M471.500 48v-4.500h17v17h-4" stroke-dasharray="1 1.600" stroke-width="0.800"/><path d="M482 50l3.500-3.500M483 46.500h2.500v2.500" stroke-width="0.800"/>
 <path d="M503.500 43.800l10.300 3-3.100 9-10.300-3z"/><path d="M497 59.500h16" stroke-width="1.400"/><path d="M500 51.500l-4.500 2.700 1 3.600 3.200-3.400" stroke-width="0.800"/>
 <path d="M521 44h15.500v6.500h-15.500zM521 53.500h15.500v6.800h-15.500z"/>
 <path d="M550 43.500h12.500v12.500h-12.500zM544.500 48.500h12.500v12.500h-12.500z"/><rect x="550.500" y="49" width="6" height="6.500" fill="#e6e4e3" stroke="none"/>
 <path d="M570 44h16.500v16.500h-8v-10h-6.500v10h-2"/><rect x="571" y="51" width="5.500" height="9.500" fill="#dcdad8" stroke="none"/>
 <path d="M594.500 48.500h11v12h-11zM594.500 48.500l5-4.800h11l-5 4.800M610.500 43.700v11.500l-5 5.300"/><path d="M598 50l3 9" stroke-width="0.500"/>
 <path d="M618.500 43.800h13.500v2.600h-5.300v13.800h-3v-13.800h-5.200z"/><circle cx="634" cy="58" r="2.300"/>
 <path d="M651.500 46.200l9 7-8.800 7.500-8.800-7.500zM643.500 53h16.500"/><path d="M660 54.500c1.500 2 2 3.500 2 4.500a1.700 1.700 0 0 1-3.400 0c0-1 0.500-2.500 1.400-4.500z"/><path d="M644.500 43.500l5.500 6" stroke="#bdbab8" stroke-width="1"/>
 <rect x="668.300" y="48.500" width="16.600" height="7.300" rx="0.800"/><path d="M671 48.500v2.500M673.500 48.500v1.500M676 48.500v2.500M678.500 48.500v1.500M681 48.500v2.500" stroke-width="0.600"/>
 <path d="M694.500 55.500h15.500v5h-15.500z"/><path d="M698 52h9v3.500h-9zM699.500 45l6.500 2.300-1.500 4-6.500-2.300zM693 49.300l2.500-1.300v3z" stroke-width="0.800"/>
 <path d="M720 47.300h11v10.700h-11z"/><circle cx="720" cy="47.300" r="3.100" fill="#e7e5e4" stroke="none"/><circle cx="731" cy="47.300" r="3.100" fill="#e7e5e4" stroke="none"/><circle cx="720" cy="58" r="3.100" fill="#e7e5e4" stroke="none"/><circle cx="731" cy="58" r="3.100" fill="#e7e5e4" stroke="none"/>
</g>
<path d="M746 44v16.700" stroke="#c6c6c6" stroke-width="1.400"/>
<g stroke="#4a4a4a" stroke-width="0.850" fill="none"><path d="M766.800 47.600h-9.300v13.700h9.300"/><path d="M757.500 54.300c1.300-0.900 2.300 0.900 3.500 0.300s2.400-0.900 3.400 0.100" stroke-width="0.800"/><path d="M766 43.200c-1.800 1.200-1.600 3.400-0.400 4.400s0.200 2.600-1 3.200 0.200 2.400 0.200 3.600-1.300 1.600-0.600 2.800v4" stroke-width="0.800"/></g>
<!-- plate label stuff bottom-left -->
<polygon points="280.800,430.200 299,430.700 306.400,438.300 279.900,437.800" fill="#e8e8e8"/>
<polygon points="303.800,430.900 327.800,431.600 328.300,438.700 310.800,438.400" fill="#e8e8e8"/>
<polygon points="333.300,431.500 393,432.800 393,440.200 333.300,439" fill="#999d9c"/>
<polygon points="335,432.500 340,432.600 340,438.500 335,438.400" fill="#6f7372"/>
<text x="342" y="438.300" font-family="Liberation Sans, sans-serif" font-size="6.200" fill="#3e4242" textLength="48" lengthAdjust="spacingAndGlyphs" transform="rotate(1.200 342 438)">PLA/ABS/PETG</text>
<polygon points="395.700,432.700 405.500,432.900 405.500,440.600 395.700,440.400" fill="#9b9f9e"/>
<polygon points="407.700,433.300 417.800,433.500 408.700,440.300" fill="#9b9f9e"/>
<!-- bottom-right cutouts -->
<polygon points="653.300,439.600 676.300,440.500 670.200,447 653.300,446.400" fill="#e8e8e8"/>
<polygon points="681.800,440.600 701.500,441.100 701.900,447.900 675.600,447.300" fill="#e8e8e8"/>
<!-- axes -->
<path d="M280 422l44 0.600" stroke="#c01818" stroke-width="1"/><path d="M326.500 422.700l-4.500-1.300v2.600z" fill="#c01818"/>
<path d="M280 422l6.300-40" stroke="#18c030" stroke-width="1.100"/><path d="M286.600 380l-1.700 4 2.600 0.400z" fill="#18c828"/>
<path d="M280 422l-7.600-21" stroke="#1c2890" stroke-width="1.100"/><path d="M271.700 398.800l-0.600 4.600 3-1.100z" fill="#1c2c9c"/>
<!-- plate texts -->
<text x="431" y="151.300" font-family="Liberation Sans, sans-serif" font-size="9.500" fill="#d2d6d5" textLength="141" lengthAdjust="spacingAndGlyphs" transform="rotate(1.100 431 151)">Bambu Textured PEI Plate</text>
<text x="0" y="0" font-family="Liberation Sans, sans-serif" font-size="12" fill="#d6dad9" textLength="101" lengthAdjust="spacingAndGlyphs" transform="translate(314.500,317) rotate(-81.800)">Left nozzle only area</text>
<text x="0" y="0" font-family="Liberation Sans, sans-serif" font-size="10.500" fill="#d6dad9" textLength="111" lengthAdjust="spacingAndGlyphs" transform="translate(669.700,218.200) rotate(86.500)">Right nozzle only area</text>
<!-- green edit icon -->
<g stroke="#10b050" stroke-width="0.900" fill="none"><path d="M332.500 123.300h8.500M333 121.500l0.600-1.800 5.600-2.800 1.300 1.300-5.200 3z"/></g>
<!-- 01 -->
<text x="707.300" y="426.700" font-family="Liberation Sans, sans-serif" font-size="11.500" font-weight="bold" fill="#00ae42" textLength="14.500" lengthAdjust="spacingAndGlyphs">01</text>
<!-- plate side icons -->
<g stroke="#4a4e4e" stroke-width="0.900" fill="#f4f4f4" stroke-linejoin="round">
 <path d="M683.300 142.200l15 0.400 0.600 11.300-15-0.400z"/><path d="M686 144.300l9.800 7.200M695.600 144.500l-9.400 7" fill="none" stroke-width="1"/>
 <path d="M685 158.600l15 0.400 0.600 11.200-15-0.400z"/><path d="M690 160.500l7 0.700-0.800 5-7-0.700zM687 168.300h11.500M687.500 163l2 1.500" fill="none" stroke-width="0.800"/>
 <path d="M686.200 175l15 0.400 0.600 11.200-15-0.400z"/><path d="M688.300 177.200h11v2.500h-11zM688.500 181.300h2.600v3.600h-2.600zM692.800 181.300h6.700M692.800 184.300h6.700" fill="none" stroke-width="0.800"/>
 <path d="M687.500 192.200l15 0.400 0.700 11.300-15-0.400z"/><rect x="691.800" y="198" width="7" height="4.300" fill="#3a3e3e" stroke="none"/><path d="M693.200 198v-1.600a2.100 2.100 0 0 1 4.200-0.300" fill="none" stroke-width="1"/>
 <path d="M688.800 209.300l15.500 0.400 0.700 12.300-15.500-0.400z"/><path d="M697 211.300l4.300 2.200v4.300l-4.300 2.200-4.300-2.200v-4.300z" fill="none" stroke-width="1"/><circle cx="697" cy="215.700" r="1.500" fill="none" stroke-width="0.800"/>
 <path d="M690.200 227.400l16 0.400 0.800 13-16-0.400z"/>
</g>
<rect x="693" y="230.500" width="6" height="7.500" fill="#4ab8e8"/><rect x="696.500" y="229.500" width="5.500" height="4" fill="#e83838"/><path d="M699.500 236l4 0.200v3h-4z" fill="#bbb" stroke="#555" stroke-width="0.500"/>
<!-- view cube -->
<polygon points="258.900,485.200 295.300,485.900 294.600,534.500 258.500,535.800" fill="#c4c4c4"/>
<polygon points="258.600,519.500 294.800,519.200 294.600,534.500 258.500,535.800" fill="#c1c1c1"/>
<text x="270.500" y="503.300" font-family="Liberation Sans, sans-serif" font-size="7.600" font-weight="bold" fill="#585858" textLength="12.300" lengthAdjust="spacingAndGlyphs">Top</text>
<text x="0" y="0" font-family="Liberation Sans, sans-serif" font-size="7.600" font-weight="bold" fill="#6a6a6a" textLength="17.500" lengthAdjust="spacingAndGlyphs" transform="translate(267,527.800) scale(1,0.560)">Front</text>
<path d="M258.200 535.800v-18" stroke="#6e78c2" stroke-width="1.700"/><path d="M258.200 513.300l-3.400 5.400h6.800z" fill="#6e78c2"/>
<path d="M259.200 508v-9" stroke="#a4dcb0" stroke-width="1.300"/><path d="M259.200 495.500l-1.800 3.800h3.600z" fill="#a4dcb0"/>
<path d="M256.400 509.500h2.200l-2.200 2.600h2.200" stroke="#6e78c2" stroke-width="0.700"/>
<path d="M258.200 536.100l34 0.600" stroke="#d47c6c" stroke-width="1.700"/><path d="M297 536.800l-5.400-3v5.800z" fill="#d47c6c"/>
<path d="M303.200 536l2.800 3M306 536l-2.800 3" stroke="#d49a6c" stroke-width="0.700"/>
<!-- camera reset -->
<circle cx="328.400" cy="529" r="10" fill="#fff"/>
<g stroke="#404444" stroke-width="1" fill="none" stroke-linecap="round"><path d="M323 526.500v-1.500a2 2 0 0 1 2-2h1.500M330.300 523h1.500a2 2 0 0 1 2 2v1.500M333.800 531.500v1.500a2 2 0 0 1-2 2h-1.500M326.500 535h-1.500a2 2 0 0 1-2-2v-1.500"/>
<path d="M328.400 525.300l3.200 1.800v3.700l-3.200 1.800-3.200-1.800v-3.700zM325.300 527.200l3.100 1.700 3.100-1.700M328.400 529v3.500" stroke-width="0.800"/></g>
</svg>
<div class="abs" style="left:0;top:547.100px;width:768px;height:0.900px;background:#7c7f80"></div>
<div class="abs" style="left:766.700px;top:18px;width:1.300px;height:530px;background:#8e9294"></div>
<svg class="abs" style="left:0;top:0;pointer-events:none" width="768" height="548" viewBox="0 0 768 548" fill="none">
 <path d="M0 0.500h768" stroke="#777a7b" stroke-width="1"/>
 <path d="M0.500 0v38.500" stroke="#63676a" stroke-width="1"/>
 <path d="M767.400 0v18" stroke="#777a7b" stroke-width="1.200"/>
 <path d="M0 0h4.500a4.500 4.500 0 0 0-4.500 4.500zM768 0h-4.500a4.500 4.500 0 0 1 4.500 4.500zM0 548h4.500a4.500 4.500 0 0 1-4.500-4.500zM768 548h-4.500a4.500 4.500 0 0 0 4.500-4.500z" fill="#fff"/>
 <path d="M0.500 5a4.500 4.500 0 0 1 4.500-4.500M767.500 5a4.500 4.500 0 0 0-4.500-4.500" stroke="#777a7b" stroke-width="1"/>
 <path d="M0.500 543a4.500 4.500 0 0 0 4.500 4.500M767.500 543a4.500 4.500 0 0 1-4.500 4.500" stroke="#9a9d9e" stroke-width="1"/>
</svg>
</body></html>
